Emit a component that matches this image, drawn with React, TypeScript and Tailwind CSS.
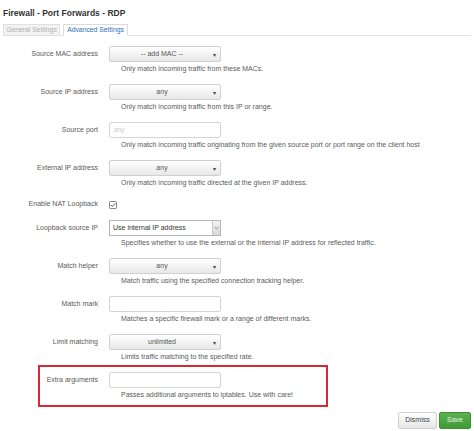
import React from "react";

const font = { fontFamily: '"Liberation Sans", Arial, sans-serif' };

function Caret() {
  return <span className="absolute right-[4px] top-[3px] text-[6px] leading-[10px] text-[#444]">▾</span>;
}

function ButtonSelect({ value }: { value: string }) {
  return (
    <div className="relative flex h-[16px] w-[112px] items-center justify-center rounded-[2px] border border-[#d0d0d0] bg-gradient-to-b from-white to-[#e8e8e8] pr-[6px] text-[7px] text-[#555]">
      {value}
      <Caret />
    </div>
  );
}

function TextInput({ placeholder }: { placeholder?: string }) {
  return (
    <div className="flex h-[16px] w-[112px] items-center rounded-[2px] border border-[#d4d4d4] bg-white pl-[4px] text-[6.5px] text-[#ccc]">
      {placeholder}
    </div>
  );
}

function NativeSelect({ value }: { value: string }) {
  return (
    <div className="flex h-[16px] w-[112px] items-stretch border border-[#b5b5b5] bg-white">
      <div className="flex flex-1 items-center pl-[3px] text-[7px] text-[#333]">{value}</div>
      <div className="flex w-[8px] items-center justify-center border-l border-[#c8c8c8] bg-gradient-to-b from-[#f2f2f2] to-[#d8d8d8]">
        <svg width="5" height="4" viewBox="0 0 5 4">
          <path d="M0.8 1.2 L2.5 2.8 L4.2 1.2" fill="none" stroke="#777" strokeWidth="0.8" />
        </svg>
      </div>
    </div>
  );
}

function Row({
  label,
  desc,
  children,
  labelClass = "w-[95px]",
}: {
  label: string;
  desc?: string;
  children: React.ReactNode;
  labelClass?: string;
}) {
  return (
    <div className="flex flex-col">
      <div className="flex h-[16px] items-center gap-[11px]">
        <div className={`${labelClass} shrink-0 text-right text-[7px] text-[#5a5a5a]`}>{label}</div>
        {children}
      </div>
      {desc && (
        <div className="mt-[2px] flex h-[10px] items-center text-[7px] text-[#5a5a5a]">
          <div className={`${labelClass} shrink-0`} />
          <div className="ml-[23px] whitespace-nowrap">{desc}</div>
        </div>
      )}
    </div>
  );
}

export default function App() {
  return (
    <div className="h-[431px] w-[474px] overflow-hidden bg-white px-[3px] pt-[8px]" style={font}>
      <div className="h-[10px] text-[8.5px] font-bold leading-[10px] text-[#333]">Firewall - Port Forwards - RDP</div>

      <div className="mt-[6px] flex h-[12px] items-end gap-[3px] border-b border-[#e2e2e2]">
        <div className="-mb-px flex h-[12px] w-[57px] items-center justify-center border border-[#e0e0e0] bg-[#f3f3f3] text-[6.8px] text-[#b0b0b0]">
          General Settings
        </div>
        <div className="-mb-px flex h-[12px] w-[65px] items-center justify-center border border-b-white border-[#dcdcdc] bg-white text-[6.8px] text-[#2d6fb7]">
          Advanced Settings
        </div>
      </div>

      <div className="mt-[10px] flex flex-col gap-[10px]">
        <Row label="Source MAC address" desc="Only match incoming traffic from these MACs.">
          <ButtonSelect value="-- add MAC --" />
        </Row>
        <Row label="Source IP address" desc="Only match incoming traffic from this IP or range.">
          <ButtonSelect value="any" />
        </Row>
        <Row
          label="Source port"
          desc="Only match incoming traffic originating from the given source port or port range on the client host"
        >
          <TextInput placeholder="any" />
        </Row>
        <Row label="External IP address" desc="Only match incoming traffic directed at the given IP address.">
          <ButtonSelect value="any" />
        </Row>
        <div className="-mb-[1px] flex h-[13px] items-center gap-[11px]">
          <div className="w-[95px] shrink-0 text-right text-[7px] text-[#5a5a5a]">Enable NAT Loopback</div>
          <svg width="8" height="8" viewBox="0 0 8 8">
            <rect x="0.5" y="0.5" width="7" height="7" rx="0.8" fill="white" stroke="#666" strokeWidth="0.8" />
            <path d="M1.8 4 L3.3 5.5 L6.3 2.2" fill="none" stroke="#444" strokeWidth="0.9" />
          </svg>
        </div>
        <Row
          label="Loopback source IP"
          desc="Specifies whether to use the external or the internal IP address for reflected traffic."
        >
          <NativeSelect value="Use internal IP address" />
        </Row>
        <Row label="Match helper" desc="Match traffic using the specified connection tracking helper.">
          <ButtonSelect value="any" />
        </Row>
        <Row label="Match mark" desc="Matches a specific firewall mark or a range of different marks.">
          <TextInput />
        </Row>
        <Row label="Limit matching" desc="Limits traffic matching to the specified rate.">
          <ButtonSelect value="unlimited" />
        </Row>
      </div>

      <div className="ml-[35px] mt-[3px] w-[290px] border-2 border-[#d42a35] py-[5px]">
        <Row
          label="Extra arguments"
          desc="Passes additional arguments to iptables. Use with care!"
          labelClass="w-[58px]"
        >
          <TextInput />
        </Row>
      </div>

      <div className="mt-[5px] flex justify-end gap-[2px]">
        <div className="flex h-[17px] w-[39px] items-center justify-center rounded-[2px] border border-[#cfcfcf] bg-gradient-to-b from-white to-[#e6e6e6] text-[7px] text-[#444]">
          Dismiss
        </div>
        <div className="flex h-[17px] w-[32px] items-center justify-center rounded-[2px] border border-[#3f8f35] bg-gradient-to-b from-[#5cb050] to-[#409a36] text-[7px] text-[#e8f5e4]">
          Save
        </div>
      </div>
    </div>
  );
}
